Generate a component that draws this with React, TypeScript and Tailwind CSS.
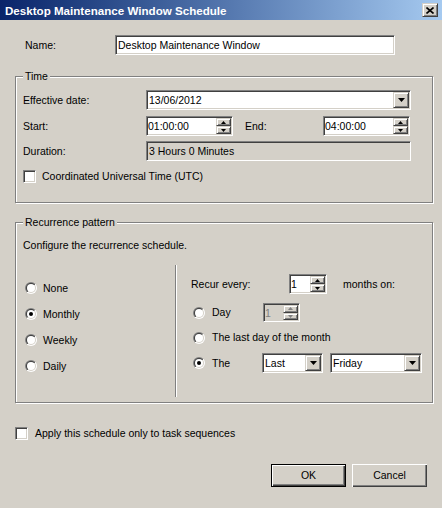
import React from 'react';

const sunken =
  'border border-t-[#808080] border-l-[#808080] border-b-white border-r-white shadow-[inset_1px_1px_0_#404040,inset_-1px_-1px_0_#d4d0c8]';
const raised =
  'bg-[#d4d0c8] border border-t-[#d4d0c8] border-l-[#d4d0c8] border-b-[#404040] border-r-[#404040] shadow-[inset_1px_1px_0_#fff,inset_-1px_-1px_0_#808080]';

function Arrow({ up = false, color = '#000' }: { up?: boolean; color?: string }) {
  return (
    <svg width="7" height="4" viewBox="0 0 7 4">
      <polygon points={up ? '3.5,0 7,4 0,4' : '0,0 7,0 3.5,4'} fill={color} />
    </svg>
  );
}

function SmallArrow({ up = false, color = '#000' }: { up?: boolean; color?: string }) {
  return (
    <svg width="5" height="3" viewBox="0 0 5 3">
      <polygon points={up ? '2.5,0 5,3 0,3' : '0,0 5,0 2.5,3'} fill={color} />
    </svg>
  );
}

function Radio({ checked = false }: { checked?: boolean }) {
  return (
    <svg width="12" height="12" viewBox="0 0 12 12" className="shrink-0">
      <defs>
        <linearGradient id="rOuter" x1="0" y1="0" x2="1" y2="1">
          <stop offset="50%" stopColor="#808080" />
          <stop offset="50%" stopColor="#ffffff" />
        </linearGradient>
        <linearGradient id="rInner" x1="0" y1="0" x2="1" y2="1">
          <stop offset="50%" stopColor="#404040" />
          <stop offset="50%" stopColor="#d4d0c8" />
        </linearGradient>
      </defs>
      <circle cx="6" cy="6" r="6" fill="url(#rOuter)" />
      <circle cx="6" cy="6" r="5" fill="url(#rInner)" />
      <circle cx="6" cy="6" r="4" fill="#fff" />
      {checked && <circle cx="6" cy="6" r="2" fill="#000" />}
    </svg>
  );
}

function Checkbox() {
  return <div className={`${sunken} w-[13px] h-[13px] bg-white shrink-0`} />;
}

function Spinner({ value, width, height = 'h-[20px]', disabled = false }: { value: string; width: string; height?: string; disabled?: boolean }) {
  const c = disabled ? '#808080' : '#000';
  return (
    <div className={`${sunken} ${width} ${height} flex ${disabled ? 'bg-[#d4d0c8] text-[#808080]' : 'bg-white'}`}>
      <span className="flex-1 flex items-center pl-[1px] pt-[1px]">{value}</span>
      <div className="flex flex-col w-[16px] py-[1px] pr-[1px]">
        <div className={`${raised} flex-1 flex items-center justify-center`}>
          <SmallArrow up color={c} />
        </div>
        <div className={`${raised} flex-1 flex items-center justify-center`}>
          <SmallArrow color={c} />
        </div>
      </div>
    </div>
  );
}

function Combo({ value, width }: { value: string; width: string }) {
  return (
    <div className={`${sunken} ${width} h-[20px] flex bg-white`}>
      <span className="flex-1 flex items-center pl-[2px] pt-[1px]">{value}</span>
      <div className="p-[1px] flex">
        <div className={`${raised} w-[16px] flex items-center justify-center`}>
          <Arrow />
        </div>
      </div>
    </div>
  );
}

function GroupBox({ label, className, children }: { label: string; className: string; children: React.ReactNode }) {
  return (
    <div
      className={`ml-[15px] w-[418px] border border-[#808080] shadow-[inset_1px_1px_0_#fff,1px_1px_0_#fff] flex flex-col ${className}`}
    >
      <span className="-mt-[7px] ml-[7px] px-[2px] bg-[#d4d0c8] self-start h-[13px]">{label}</span>
      {children}
    </div>
  );
}

function Button({ label, isDefault = false }: { label: string; isDefault?: boolean }) {
  return (
    <div
      className={`w-[75px] h-[23px] flex items-center justify-center bg-[#d4d0c8] ${
        isDefault
          ? 'border border-black shadow-[inset_1px_1px_0_#fff,inset_-1px_-1px_0_#404040,inset_-2px_-2px_0_#808080]'
          : 'shadow-[inset_1px_1px_0_#fff,inset_-1px_-1px_0_#404040,inset_-2px_-2px_0_#808080]'
      }`}
    >
      {label}
    </div>
  );
}

export default function App() {
  return (
    <div className="w-[442px] h-[508px] bg-[#d4d0c8] text-black text-[10.5px] leading-[13px] font-['Liberation_Sans',Arial,sans-serif] flex flex-col overflow-hidden">
      {/* title bar */}
      <div className="h-[20px] shrink-0 flex items-center justify-between bg-linear-to-r from-[#0a246a] to-[#a6caf0] pl-[5px] pr-[4px]">
        <span className="text-white font-bold text-[11.6px]">Desktop Maintenance Window Schedule</span>
        <div className={`${raised} w-[16px] h-[14px] flex items-center justify-center`}>
          <svg width="8" height="7" viewBox="0 0 8 7">
            <path d="M0.5 0.5 L7.5 6.5 M7.5 0.5 L0.5 6.5" stroke="#000" strokeWidth="1.6" />
          </svg>
        </div>
      </div>

      {/* name */}
      <div className="flex items-center mt-[15px] pl-[25px] h-[20px]">
        <span className="w-[90px]">Name:</span>
        <div className={`${sunken} w-[280px] h-[20px] bg-white flex items-center pl-[2px] pt-[1px]`}>
          Desktop Maintenance Window
        </div>
      </div>

      {/* time */}
      <GroupBox label="Time" className="mt-[21px] h-[127px]">
        <div className="flex flex-col pl-[7px] mt-[7px]">
          <div className="flex items-center h-[20px]">
            <span className="w-[123px]">Effective date:</span>
            <Combo value="13/06/2012" width="w-[265px]" />
          </div>
          <div className="flex items-center h-[20px] mt-[6px]">
            <span className="w-[123px]">Start:</span>
            <Spinner value="01:00:00" width="w-[87px]" />
            <span className="ml-[12px] w-[78px]">End:</span>
            <Spinner value="04:00:00" width="w-[87px]" />
          </div>
          <div className="flex items-center h-[20px] mt-[5px]">
            <span className="w-[123px]">Duration:</span>
            <div className={`${sunken} w-[265px] h-[20px] flex items-center pl-[2px] pt-[1px]`}>3 Hours 0 Minutes</div>
          </div>
          <div className="flex items-center h-[13px] mt-[9px] gap-[6px]">
            <Checkbox />
            <span>Coordinated Universal Time (UTC)</span>
          </div>
        </div>
      </GroupBox>

      {/* recurrence */}
      <GroupBox label="Recurrence pattern" className="mt-[19px] h-[181px]">
        <span className="mt-[10px] ml-[7px] h-[13px]">Configure the recurrence schedule.</span>
        <div className="flex mt-[13px] h-[132px]">
          <div className="w-[160px] border-r border-[#808080] shadow-[1px_0_0_#fff] flex flex-col gap-[14px] pt-[17px] pl-[9px]">
            {[
              ['None', false],
              ['Monthly', true],
              ['Weekly', false],
              ['Daily', false],
            ].map(([label, checked]) => (
              <div key={label as string} className="flex items-center h-[12px] gap-[6px]">
                <Radio checked={checked as boolean} />
                <span>{label as string}</span>
              </div>
            ))}
          </div>
          <div className="flex-1 flex flex-col pl-[15px] pt-[9px]">
            <div className="flex items-center h-[20px]">
              <span className="w-[98px]">Recur every:</span>
              <Spinner value="1" width="w-[38px]" />
              <span className="ml-[16px]">months on:</span>
            </div>
            <div className="flex items-center h-[19px] mt-[9px] pl-[2px]">
              <div className="w-[70px] flex items-center gap-[7px]">
                <Radio />
                <span>Day</span>
              </div>
              <Spinner value="1" width="w-[37px]" height="h-[19px]" disabled />
            </div>
            <div className="flex items-center h-[13px] mt-[9px] pl-[2px] gap-[7px]">
              <Radio />
              <span>The last day of the month</span>
            </div>
            <div className="flex items-center h-[20px] mt-[9px] pl-[2px]">
              <div className="w-[69px] flex items-center gap-[7px]">
                <Radio checked />
                <span>The</span>
              </div>
              <Combo value="Last" width="w-[61px]" />
              <div className="ml-[7px]">
                <Combo value="Friday" width="w-[92px]" />
              </div>
            </div>
          </div>
        </div>
      </GroupBox>

      {/* task sequences */}
      <div className="flex items-center h-[13px] mt-[24px] pl-[15px] gap-[7px]">
        <Checkbox />
        <span>Apply this schedule only to task sequences</span>
      </div>

      {/* buttons */}
      <div className="flex justify-end gap-[6px] pr-[15px] mt-[24px]">
        <Button label="OK" isDefault />
        <Button label="Cancel" />
      </div>
    </div>
  );
}
